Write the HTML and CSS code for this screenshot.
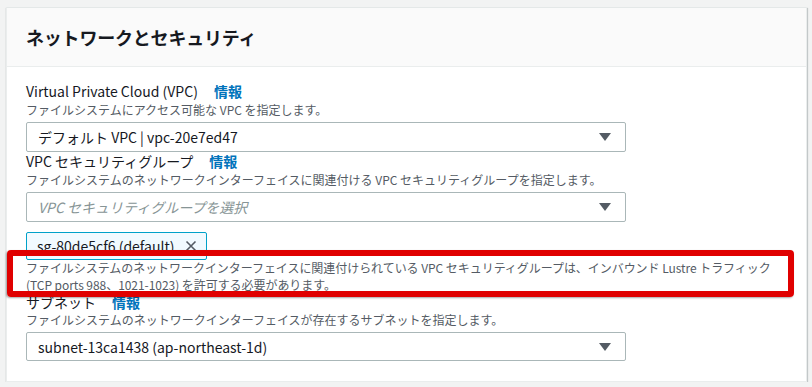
FILE: index.html
```html
<!DOCTYPE html>
<html lang="ja">
<head>
  <meta charset="UTF-8">
  <meta name="viewport" content="width=device-width, initial-scale=1.0">
  <title>ネットワークとセキュリティ</title>
  <link rel="stylesheet" href="styles.css">
</head>
<body>
  <div class="card">
    <div class="card-header">
      <h2>ネットワークとセキュリティ</h2>
    </div>
    <div class="card-body">
      <div class="field">
        <div class="label">Virtual Private Cloud (VPC)<a class="info">情報</a></div>
        <div class="desc first">ファイルシステムにアクセス可能な VPC を指定します。</div>
        <div class="select first">
          <span>デフォルト VPC | vpc-20e7ed47</span>
          <span class="caret"></span>
        </div>
      </div>

      <div class="field">
        <div class="label">VPC セキュリティグループ<a class="info">情報</a></div>
        <div class="desc second">ファイルシステムのネットワークインターフェイスに関連付ける VPC セキュリティグループを指定します。</div>
        <div class="select second">
          <span class="placeholder">VPC セキュリティグループを選択</span>
          <span class="caret"></span>
        </div>
        <div class="token">
          <span>sg-80de5cf6 (default)</span>
          <svg class="remove" width="12" height="12" viewBox="0 0 12 12">
            <path d="M1.5 1.5 L10.5 10.5 M10.5 1.5 L1.5 10.5" stroke="#545b64" stroke-width="1.6" fill="none"/>
          </svg>
        </div>
        <div class="warning">
          ファイルシステムのネットワークインターフェイスに関連付けられている VPC セキュリティグループは、インバウンド Lustre トラフィック<br>
          (TCP ports 988、1021-1023) を許可する必要があります。
        </div>
      </div>

      <div class="field">
        <div class="label">サブネット<a class="info">情報</a></div>
        <div class="desc third">ファイルシステムのネットワークインターフェイスが存在するサブネットを指定します。</div>
        <div class="select third">
          <span>subnet-13ca1438 (ap-northeast-1d)</span>
          <span class="caret"></span>
        </div>
      </div>

      <!-- annotation frame drawn over the warning -->
      <div class="highlight"></div>
    </div>
  </div>
</body>
</html>
```

FILE: styles.css
```css
body {
  margin: 0;
  background-color: #f2f3f3;
  font-family: "Noto Sans CJK JP", "Noto Sans", sans-serif;
  color: #16191f;
}

.card {
  margin: 7px 0 0 6px;
  width: 801px;
  box-sizing: border-box;
  background-color: #fff;
  border: 1px solid #eaeded;
  border-top-color: #e4e8e8;
  box-shadow: 0 1px 1px 0 rgba(0, 28, 36, 0.3), 1px 1px 1px 0 rgba(0, 28, 36, 0.15);
}

.card-header {
  background-color: #fafafa;
  border-bottom: 1px solid #eaeded;
  padding: 18px 20px 18px 19px;
}

.card-header h2 {
  margin: 0;
  font-size: 18px;
  line-height: 22px;
  font-weight: 700;
  letter-spacing: -0.2px;
}

.card-body {
  position: relative;
  padding: 15px 20px 20px 19px;
}

.label {
  font-size: 14px;
  line-height: 18px;
}

.info {
  margin-left: 16px;
  color: #0073bb;
  font-weight: 700;
}

.desc {
  font-size: 12px;
  line-height: 16px;
  color: #545b64;
}

.desc.first {
  margin-top: 2px;
}

.desc.second {
  margin-top: 2px;
}

.desc.third {
  margin-top: 1px;
}

.select {
  width: 600px;
  height: 30px;
  box-sizing: border-box;
  border: 1px solid #aab7b8;
  border-radius: 2px;
  display: flex;
  align-items: center;
  justify-content: space-between;
  padding: 0 14px 0 11px;
  font-size: 14px;
}

.select.first {
  margin-top: 4px;
}

.select.second {
  margin-top: 4px;
}

.select.third {
  margin-top: 4px;
  height: 29px;
}

.placeholder {
  color: #879596;
  font-style: italic;
}

.caret {
  width: 0;
  height: 0;
  border-left: 6px solid transparent;
  border-right: 6px solid transparent;
  border-top: 8px solid #545b64;
}

.token {
  margin-top: 10px;
  width: 181px;
  height: 28px;
  box-sizing: border-box;
  display: flex;
  align-items: center;
  justify-content: space-between;
  padding: 0 9px 0 10px;
  background-color: #f1faff;
  border: 1px solid #00a1c9;
  border-radius: 2px;
  font-size: 14px;
}

.warning {
  font-size: 12px;
  line-height: 16.5px;
  color: #545b64;
  white-space: nowrap;
  letter-spacing: -0.05px;
}

.highlight {
  position: absolute;
  top: 183px;
  left: 0;
  width: 787px;
  height: 47px;
  box-sizing: border-box;
  border: 6px solid #e00000;
  border-radius: 4px;
  box-shadow: -1px 1px 2px rgba(0, 0, 0, 0.35);
}
```
